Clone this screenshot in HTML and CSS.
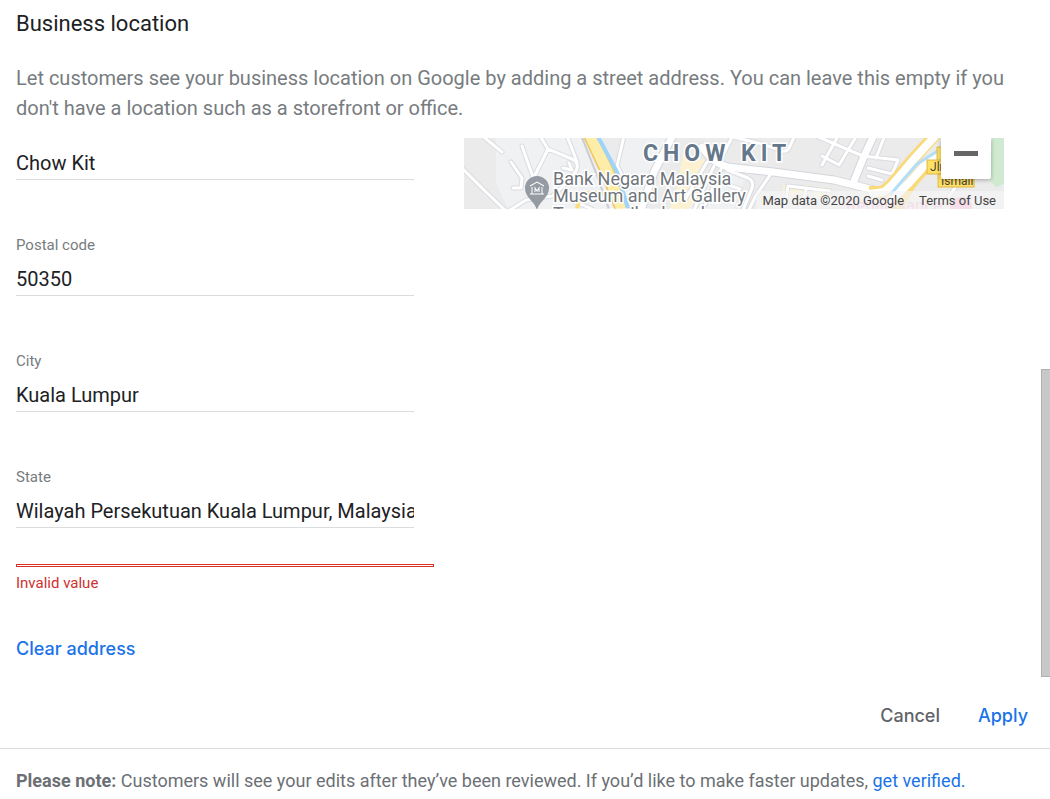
FILE: index.html
```html
<!DOCTYPE html>
<html lang="en">
<head>
  <meta charset="UTF-8" />
  <meta name="viewport" content="width=device-width, initial-scale=1.0"/>
  <title>Business location</title>
  <link rel="stylesheet" href="styles.css">
</head>
<body>
  <main class="dialog">
    <h2 class="title">Business location</h2>
    <p class="intro">Let customers see your business location on Google by adding a street address. You can leave this empty if you don't have a location such as a storefront or office.</p>

    <div class="columns">
      <form class="address" id="address">
        <div class="field">
          <input type="text" class="field-input" aria-label="Street address" value="Chow Kit">
        </div>
        <div class="field">
          <label class="field-label" for="postal">Postal code</label>
          <input type="text" class="field-input" id="postal" value="50350">
        </div>
        <div class="field">
          <label class="field-label" for="city">City</label>
          <input type="text" class="field-input" id="city" value="Kuala Lumpur">
        </div>
        <div class="field">
          <label class="field-label" for="state">State</label>
          <input type="text" class="field-input" id="state" value="Wilayah Persekutuan Kuala Lumpur, Malaysia">
        </div>
        <div class="error-line"></div>
        <p class="error-text">Invalid value</p>
        <button type="button" class="btn btn-clear">Clear address</button>
      </form>

      <div class="map">
        <svg class="map-canvas" viewBox="0 0 540 71" preserveAspectRatio="xMinYMin slice" aria-hidden="true">
          <rect width="540" height="71" fill="#ebebeb"/>
          <!-- lighter blocks -->
          <path d="M32 0H119L150 71H44L32 45zM160 0H205L188 40L180 71H164L150 40zM225 71L245 38L262 34L280 42L270 71z" fill="#f0f1f3"/>
          <path d="M219 15L241 22L236 46L240 52L224 71H206L214 45zM319 47H345V57H319zM350 48L366 50V60H350z" fill="#fcf2d2"/>
          <path d="M528 0H540V46L532 49L525 42z" fill="#cfead1"/>

          <!-- small roads: casing, then surface -->
          <defs>
            <g id="roads" fill="none" stroke-linecap="round" stroke-linejoin="round">
              <path d="M16 -4L38 14M-2 30L22 54L41 72M58 8L70 42M47 24L58 40L57 50L49 50M76 -2L84 11L67 45M84 11L108 21Q116 25 112 33L104 44L88 58L62 62L46 72M103 -2L113 24M105 25L108 32L99 30"/>
              <path d="M98 58L128 71M160 -2L153 28L162 44M250 28L230 72M257 31L241 67M243 24L222 60M263 32L284 40Q290 43 288 50L279 72M306 37L291 59L285 72M245 40L276 51"/>
              <path d="M269 -3L259 17M269 -1L298 6L318 13Q323 14 325 10L331 -3M320 72L324 48L366 53M342 52L336 72"/>
              <path d="M352 -2L399 18L434 22L428 36L404 30M374 -2L358 27M393 -3L375 27L358 18M421 -3L412 20M404 38L418 42M485 58L491 50"/>
            </g>
            <g id="avenues" fill="none" stroke-linecap="round" stroke-linejoin="round">
              <path d="M209 -3L190 34L176 75M238 9Q250 29 272 30L309 34L370 42L418 54M410 -3L400 18L390 43"/>
            </g>
          </defs>
          <use href="#roads" stroke="#d9dbe0" stroke-width="5"/>
          <use href="#avenues" stroke="#d3d6dc" stroke-width="9"/>
          <use href="#roads" stroke="#fff" stroke-width="3"/>
          <use href="#avenues" stroke="#fff" stroke-width="7"/>

          <!-- highways and rivers -->
          <g fill="none">
            <path d="M117 -3L132 35L146 74" stroke="#c9ccd0" stroke-width="2"/>
            <path d="M126 -3L143 33L159 74" stroke="#efc75a" stroke-width="14"/>
            <path d="M126 -3L143 33L159 74" stroke="#feeca9" stroke-width="11"/>
            <path d="M133 -3L153 34L165 74" stroke="#9ed4fa" stroke-width="4"/>
            <path d="M113 72Q114 58 125 55L140 55" stroke="#fbdc77" stroke-width="4"/>
            <path d="M405 54L418 54Q426 49 432 41L450 20L472 -4M430 74L446 46L460 30L482 12" stroke="#f9d978" stroke-width="12"/>
            <path d="M405 56L420 54Q427 49 433 41L451 20L473 -4M421 68L445 45L459 29L481 11" stroke="#fff" stroke-width="8"/>
            <path d="M426 57L445 35L453 26L480 9" stroke="#b3def8" stroke-width="3"/>
          </g>

          <!-- street signs -->
          <g fill="#ffe168" stroke="#e0b93e">
            <rect x="473" y="9" width="14" height="14"/>
            <rect x="463" y="22" width="20" height="14"/>
            <rect x="474" y="36" width="36" height="13"/>
          </g>
          <g class="sign-text">
            <text x="466" y="33">Jln</text>
            <text x="477" y="47">Ismail</text>
          </g>

          <g class="hotel">
            <text x="382" y="73">Renaissance</text>
            <circle cx="497" cy="70" r="11"/>
          </g>

          <text class="district" x="179" y="23">CHOW KIT</text>
          <g class="place">
            <text x="89" y="47">Bank Negara Malaysia</text>
            <text x="89" y="64">Museum and Art Gallery</text>
            <text x="89" y="82">Temporarily closed</text>
          </g>
          <path d="M73 38A12 12 0 0 1 85 50C85 60 76 62 73 72C70 62 61 60 61 50A12 12 0 0 1 73 38z" fill="#949ba2"/>
          <path d="M66 48L73 44L80 48M68 49V56M78 49V56M66 56H80M71 54V50L73 53L75 50V54" fill="none" stroke="#fff" stroke-width="1"/>
        </svg>
        <div class="map-credit">
          <span>Map data ©2020 Google</span>
          <a href="#">Terms of Use</a>
        </div>
        <button type="button" class="zoom-out" aria-label="Zoom out">
          <svg width="24" height="5" viewBox="0 0 24 5" aria-hidden="true"><rect width="24" height="5" fill="#666"/></svg>
        </button>
      </div>
    </div>

    <div class="actions">
      <button type="button" class="btn btn-cancel">Cancel</button>
      <button type="submit" form="address" class="btn">Apply</button>
    </div>
    <div class="scroll-thumb"></div>
  </main>

  <footer class="note">
    <strong>Please note:</strong> Customers will see your edits after they’ve been reviewed. If you’d like to make faster updates, <a href="#">get verified.</a>
  </footer>
</body>
</html>
```
FILE: styles.css
```css
* {
  box-sizing: border-box;
}
body {
  margin: 0;
  background: #fff;
  color: #202124;
  font-family: Roboto, Arial, sans-serif;
  font-size: 20px;
}
a {
  color: #1a73e8;
  text-decoration: none;
}
.dialog {
  position: relative;
  padding: 9px 0 20px 16px;
}
.title {
  margin: 0 0 24px;
  font-family: "Google Sans", Roboto, sans-serif;
  font-size: 22px;
  font-weight: 400;
  line-height: 30px;
}
.intro {
  margin: 0 40px 15px 0;
  color: #777c80;
  line-height: 30px;
}
.columns {
  display: grid;
  grid-template-columns: 28fr 38fr;
  gap: 50px;
  align-items: start;
  margin-right: 46px;
}

/* address form */
.address {
  min-width: 0;
  padding-top: 10px;
}
.field {
  margin-bottom: 55px;
}
.field-label {
  display: block;
  margin-bottom: 9px;
  color: #777c80;
  font-size: 15px;
  line-height: 20px;
}
.field-input {
  display: block;
  width: 100%;
  height: 32px;
  padding: 0 0 2px;
  border: none;
  border-bottom: 1px solid #dadce0;
  border-radius: 0;
  outline: none;
  background: none;
  color: #202124;
  font-family: inherit;
  font-size: 20px;
}
.error-line {
  height: 3px;
  margin: -19px -20px 6px 0;
  border: 1px solid #d93025;
}
.error-text {
  margin: 0 0 44px;
  color: #d03030;
  font-size: 15px;
  line-height: 20px;
}
.btn {
  padding: 0;
  border: none;
  background: none;
  color: #1a73e8;
  font-family: "Google Sans", Inter, sans-serif;
  font-size: 18px;
  font-weight: 500;
  line-height: 24px;
  cursor: pointer;
}
.btn-clear {
  display: block;
}
.btn-cancel {
  color: #5f6368;
}

/* map preview */
.map {
  position: relative;
  height: 71px;
  overflow: hidden;
}
.map-canvas {
  display: block;
  width: 100%;
  height: 100%;
}
.map text {
  font-family: Roboto, Arial, sans-serif;
}
.district {
  fill: #64778b;
  stroke: #fff;
  stroke-width: 3px;
  paint-order: stroke;
  font-size: 23px;
  font-weight: 700;
  letter-spacing: 5px;
}
.place {
  fill: #6f757b;
  stroke: #fff;
  stroke-width: 3px;
  paint-order: stroke;
  font-size: 18px;
}
.sign-text {
  fill: #4a4430;
  font-size: 12px;
}
.hotel {
  fill: #f3a9cf;
  font-size: 17px;
}
.map-credit {
  position: absolute;
  right: 0;
  bottom: 0;
  display: flex;
  gap: 15px;
  padding: 1px 8px 0 6px;
  background: rgba(245, 245, 245, 0.7);
  color: #444;
  font-size: 13px;
  line-height: 17px;
}
.map-credit a {
  color: #444;
}
.zoom-out {
  position: absolute;
  top: 0;
  right: 13px;
  display: flex;
  align-items: flex-start;
  justify-content: center;
  width: 50px;
  height: 41px;
  padding: 13px 0 0;
  border: none;
  border-radius: 0 0 2px 2px;
  background: #fff;
  box-shadow: 0 1px 4px rgba(0, 0, 0, 0.3);
  cursor: pointer;
}

/* bottom bar */
.actions {
  display: flex;
  justify-content: flex-end;
  gap: 38px;
  margin: 43px 22px 0 0;
}
.scroll-thumb {
  position: absolute;
  top: 369px;
  right: 0;
  bottom: 71px;
  width: 9px;
  border: 1px solid #b0b0b0;
  border-right: none;
  background: #c8c8c8;
}
.note {
  padding: 20px 16px;
  border-top: 1px solid #dadce0;
  color: #6c7075;
  font-size: 18px;
  line-height: 24px;
}
```
